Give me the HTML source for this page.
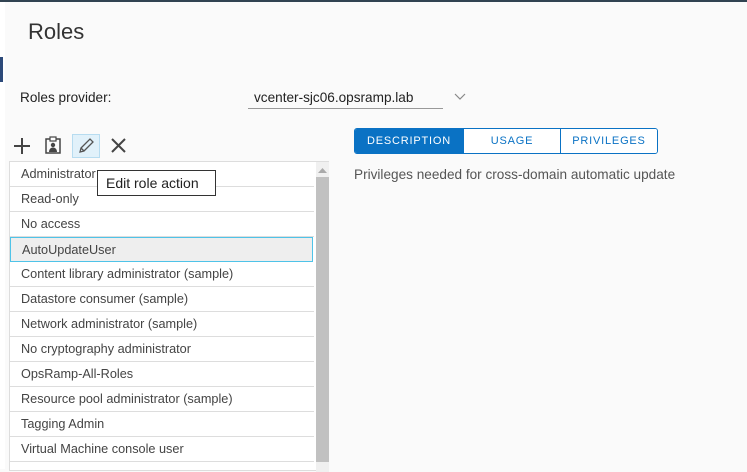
<!DOCTYPE html>
<html><head><style>
*{box-sizing:border-box;margin:0;padding:0}
body{width:747px;height:469px;overflow:hidden;background:#fafafa;font-family:"Liberation Sans",sans-serif;color:#333;position:relative}
.top{position:absolute;left:0;top:0;width:747px;height:2px;background:#314351}
.lstrip{position:absolute;left:0;top:2px;width:5px;height:467px;background:#fff}
.acc{position:absolute;left:0;top:57px;width:3px;height:25px;background:#2d4a7a}
h1{position:absolute;left:28px;top:19px;font-size:22px;font-weight:normal;color:#333}
.lbl{position:absolute;left:20px;top:90px;font-size:13.6px;color:#222}
.sel{position:absolute;left:248px;top:87px;width:195px;height:22px;border-bottom:1px solid #999;font-size:13.6px;padding-left:6px;padding-top:3px;color:#222}
.chev{position:absolute;left:454px;top:93px}
.tb{position:absolute;top:134px;width:28px;height:24px}
.tb.act{background:#e1f1fa;border:1px solid #b7dcf0}
.list{position:absolute;left:9px;top:161px;width:320px;height:310px;background:#fff;border:1px solid #ddd}
.row{position:absolute;left:0;width:304px;height:25px;border-bottom:1px solid #ddd;font-size:12.7px;padding:5px 0 0 11px;color:#444;white-space:nowrap}
.row.s{background:#eee;border:1px solid #4fc3e8;width:303px}
.sb{position:absolute;left:306px;top:0;width:13px;height:310px;background:#f0f0f0}
.th{position:absolute;left:306px;top:15px;width:13px;height:285px;background:#c1c1c1}
.tip{position:absolute;left:97px;top:170px;width:119px;height:26px;background:#fff;border:1px solid #333;font-size:14px;padding:4px 0 0 8px;color:#222}
.tabs{position:absolute;left:354px;top:128px;height:26px;display:flex;border:1px solid #0a72c4;border-radius:3px;overflow:hidden}
.tab{font-size:11px;letter-spacing:0.8px;color:#0a72c4;display:flex;align-items:center;justify-content:center;border-left:1px solid #0a72c4;background:#fff}
.tab.a{background:#0a72c4;color:#fff;border-left:none}
.desc{position:absolute;left:354px;top:167px;font-size:13.6px;color:#555}
</style></head><body>
<div class="top"></div><div class="lstrip"></div><div class="acc"></div>
<h1>Roles</h1>
<div class="lbl">Roles provider:</div>
<div class="sel">vcenter-sjc06.opsramp.lab</div>
<svg class="chev" width="12" height="8"><path d="M1 1l5 5 5-5" stroke="#888" fill="none" stroke-width="1.2"/></svg>
<svg style="position:absolute;left:13px;top:137px" width="18" height="18"><path d="M9 1v16M1 9h16" stroke="#444" stroke-width="2"/></svg>
<svg style="position:absolute;left:45px;top:136px" width="16" height="18"><rect x="1" y="3" width="14" height="14" fill="none" stroke="#444" stroke-width="1.5"/><rect x="5" y="1" width="6" height="4" fill="#fff" stroke="#444" stroke-width="1.2"/><circle cx="8" cy="9" r="2.2" fill="#444"/><path d="M4 16c0-3 2-4.5 4-4.5s4 1.5 4 4.5z" fill="#444"/></svg>
<div class="tb act" style="left:72px"></div>
<svg style="position:absolute;left:77px;top:137px" width="18" height="18"><path d="M3 15l1-4L13 2l3 3-9 9z M4 11l3 3" stroke="#555" fill="none" stroke-width="1.3"/></svg>
<svg style="position:absolute;left:111px;top:138px" width="15" height="15"><path d="M1 1l13 13M14 1L1 14" stroke="#444" stroke-width="2"/></svg>
<div class="list">
<div class="row" style="top:0">Administrator</div>
<div class="row" style="top:25px">Read-only</div>
<div class="row" style="top:50px">No access</div>
<div class="row s" style="top:75px">AutoUpdateUser</div>
<div class="row" style="top:100px">Content library administrator (sample)</div>
<div class="row" style="top:125px">Datastore consumer (sample)</div>
<div class="row" style="top:150px">Network administrator (sample)</div>
<div class="row" style="top:175px">No cryptography administrator</div>
<div class="row" style="top:200px">OpsRamp-All-Roles</div>
<div class="row" style="top:225px">Resource pool administrator (sample)</div>
<div class="row" style="top:250px">Tagging Admin</div>
<div class="row" style="top:275px">Virtual Machine console user</div>
<div class="sb"></div><div class="th"></div>
<svg style="position:absolute;left:308px;top:5px" width="9" height="6"><path d="M0 6l4.5-5 4.5 5z" fill="#aaa"/></svg>
</div>
<div class="tip">Edit role action</div>
<div class="tabs"><div class="tab a" style="width:108px">DESCRIPTION</div><div class="tab" style="width:97px">USAGE</div><div class="tab" style="width:97px">PRIVILEGES</div></div>
<div class="desc">Privileges needed for cross-domain automatic update</div>
</body></html>
